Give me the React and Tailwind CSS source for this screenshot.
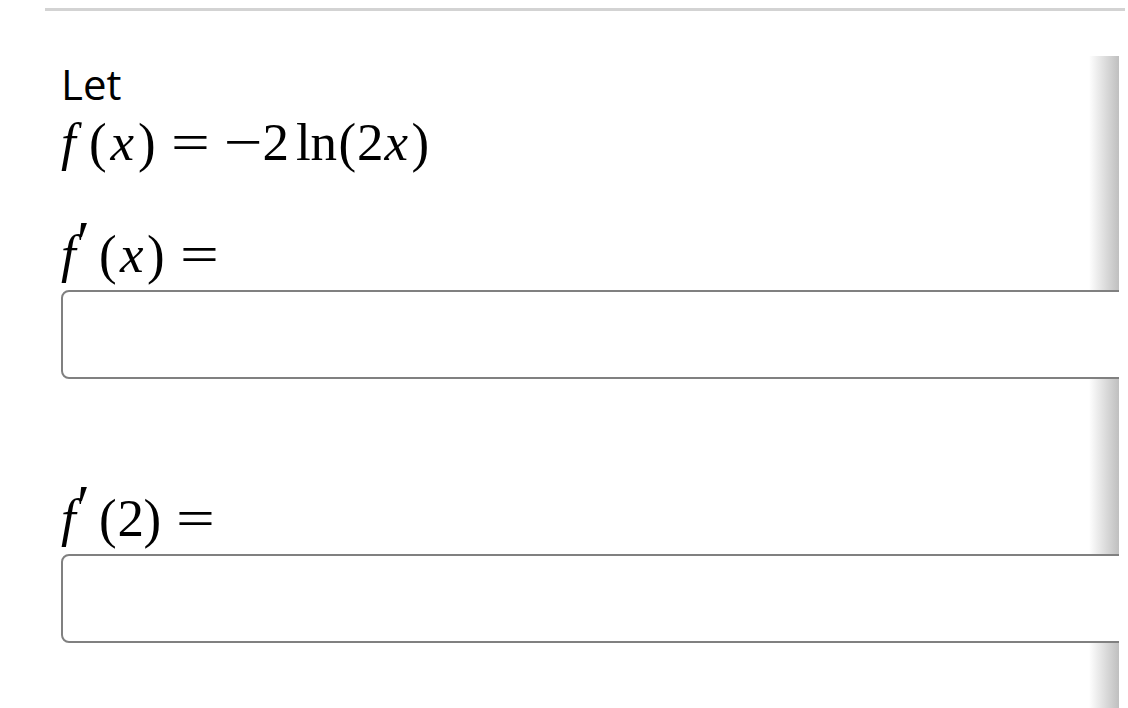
import React from "react";

// One glyph of the formula, in a fixed-width box so the spacing follows TeX layout
const G = ({ w, italic, children }) => (
  <span className={`inline-block text-center ${w} ${italic ? "italic" : ""}`}>{children}</span>
);

const Paren = ({ w, children }) => (
  <span className={`inline-block text-center ${w} scale-y-[1.05]`}>{children}</span>
);

// relation / binary signs in TeX are wider than the Times ones
const Wide = ({ children }) => (
  <span className="inline-block w-[39px] scale-x-[1.3] text-center">{children}</span>
);

const FPrime = () => (
  <span className="inline-block w-[37px] text-left">
    <span className="italic">f</span>
    <span className="relative -top-[10px] ml-[1px] text-[60px] leading-none">′</span>
  </span>
);

const AnswerBox = () => (
  <input
    type="text"
    className="relative z-10 mt-[2px] block h-[89px] w-[1120px] rounded-[8px] border-2 border-[#808080] bg-white px-3 outline-none"
  />
);

export default function App() {
  return (
    <div className="min-h-[708px] w-full overflow-hidden bg-white">
      {/* thin divider at the top */}
      <div className="ml-[45px] mt-[8px] h-[3px] w-[1080px] bg-[#d3d3d3]"></div>

      {/* question body, clipped on the right with a scroll shadow */}
      <div className="relative mt-[45px] h-[652px] w-[1119px] overflow-hidden pl-[61px] pt-[4px]">
        <div className="pointer-events-none absolute bottom-0 right-0 top-0 w-[30px] bg-linear-to-r from-white to-[#bfbfbf]"></div>

        <div className="relative text-[42px] leading-[48px] text-black [font-family:'Open_Sans',sans-serif]">
          Let
        </div>

        <div className="relative whitespace-nowrap text-[53px] leading-[68px] text-black [font-family:'Liberation_Serif',serif]">
          <G w="w-[27px] text-left" italic>f</G>
          <Paren w="w-[19.5px]">(</Paren>
          <G w="w-[29.5px]" italic>x</G>
          <Paren w="w-[19.5px]">)</Paren>
          <span className="inline-block w-[14px]"></span>
          <Wide>=</Wide>
          <span className="inline-block w-[14px]"></span>
          <Wide>−</Wide>
          <G w="w-[25px]">2</G>
          <span className="inline-block w-[8px]"></span>
          <G w="w-[42px]">ln</G>
          <Paren w="w-[19.5px]">(</Paren>
          <G w="w-[25px]">2</G>
          <G w="w-[28.5px]" italic>x</G>
          <Paren w="w-[19.5px]">)</Paren>
        </div>

        <div className="relative mt-[44px] whitespace-nowrap text-[53px] leading-[68px] text-black [font-family:'Liberation_Serif',serif]">
          <FPrime />
          <Paren w="w-[19.5px]">(</Paren>
          <G w="w-[28.5px]" italic>x</G>
          <Paren w="w-[19.5px]">)</Paren>
          <span className="inline-block w-[14px]"></span>
          <Wide>=</Wide>
        </div>
        <AnswerBox />

        <div className="relative mt-[105px] whitespace-nowrap text-[53px] leading-[68px] text-black [font-family:'Liberation_Serif',serif]">
          <FPrime />
          <Paren w="w-[19.5px]">(</Paren>
          <G w="w-[25px]">2</G>
          <Paren w="w-[19.5px]">)</Paren>
          <span className="inline-block w-[14px]"></span>
          <Wide>=</Wide>
        </div>
        <AnswerBox />
      </div>
    </div>
  );
}
